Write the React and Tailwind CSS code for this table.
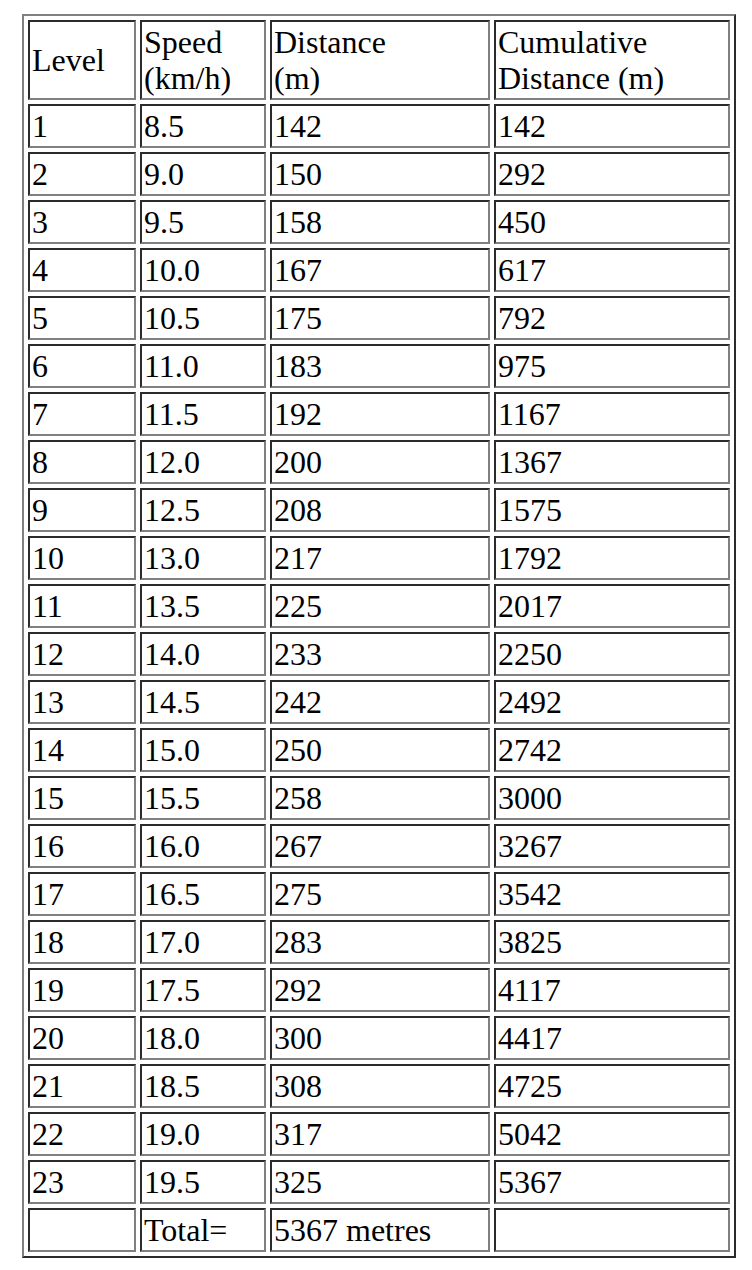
import React from "react";

const rows = [
  ["1", "8.5", "142", "142"],
  ["2", "9.0", "150", "292"],
  ["3", "9.5", "158", "450"],
  ["4", "10.0", "167", "617"],
  ["5", "10.5", "175", "792"],
  ["6", "11.0", "183", "975"],
  ["7", "11.5", "192", "1167"],
  ["8", "12.0", "200", "1367"],
  ["9", "12.5", "208", "1575"],
  ["10", "13.0", "217", "1792"],
  ["11", "13.5", "225", "2017"],
  ["12", "14.0", "233", "2250"],
  ["13", "14.5", "242", "2492"],
  ["14", "15.0", "250", "2742"],
  ["15", "15.5", "258", "3000"],
  ["16", "16.0", "267", "3267"],
  ["17", "16.5", "275", "3542"],
  ["18", "17.0", "283", "3825"],
  ["19", "17.5", "292", "4117"],
  ["20", "18.0", "300", "4417"],
  ["21", "18.5", "308", "4725"],
  ["22", "19.0", "317", "5042"],
  ["23", "19.5", "325", "5367"],
  ["", "Total=", "5367 metres", ""],
];

function Cell({ children, tall }) {
  return (
    <div
      className={`flex items-center border-2 border-solid border-t-[#2b2b2b] border-l-[#2b2b2b] border-r-[#808080] border-b-[#808080] px-[2px] py-[2px] whitespace-nowrap ${
        tall ? "h-[80px]" : "h-[44px]"
      }`}
    >
      <div>{children}</div>
    </div>
  );
}

export default function App() {
  return (
    <div className="bg-white min-h-[1270px] pt-[14px] pl-[22px] font-['Liberation_Serif','Times_New_Roman',serif] text-[32px] leading-[36px] text-black">
      <div className="w-[714px] border-2 border-solid border-t-[#808080] border-l-[#808080] border-r-[#2b2b2b] border-b-[#2b2b2b] p-[4px]">
        <div className="grid grid-cols-[108px_126px_220px_236px] gap-[4px]">
          <Cell tall>Level</Cell>
          <Cell tall>
            Speed
            <br />
            (km/h)
          </Cell>
          <Cell tall>
            Distance
            <br />
            (m)
          </Cell>
          <Cell tall>
            Cumulative
            <br />
            Distance (m)
          </Cell>
          {rows.map((r, i) =>
            r.map((c, j) => <Cell key={`${i}-${j}`}>{c}</Cell>)
          )}
        </div>
      </div>
    </div>
  );
}
